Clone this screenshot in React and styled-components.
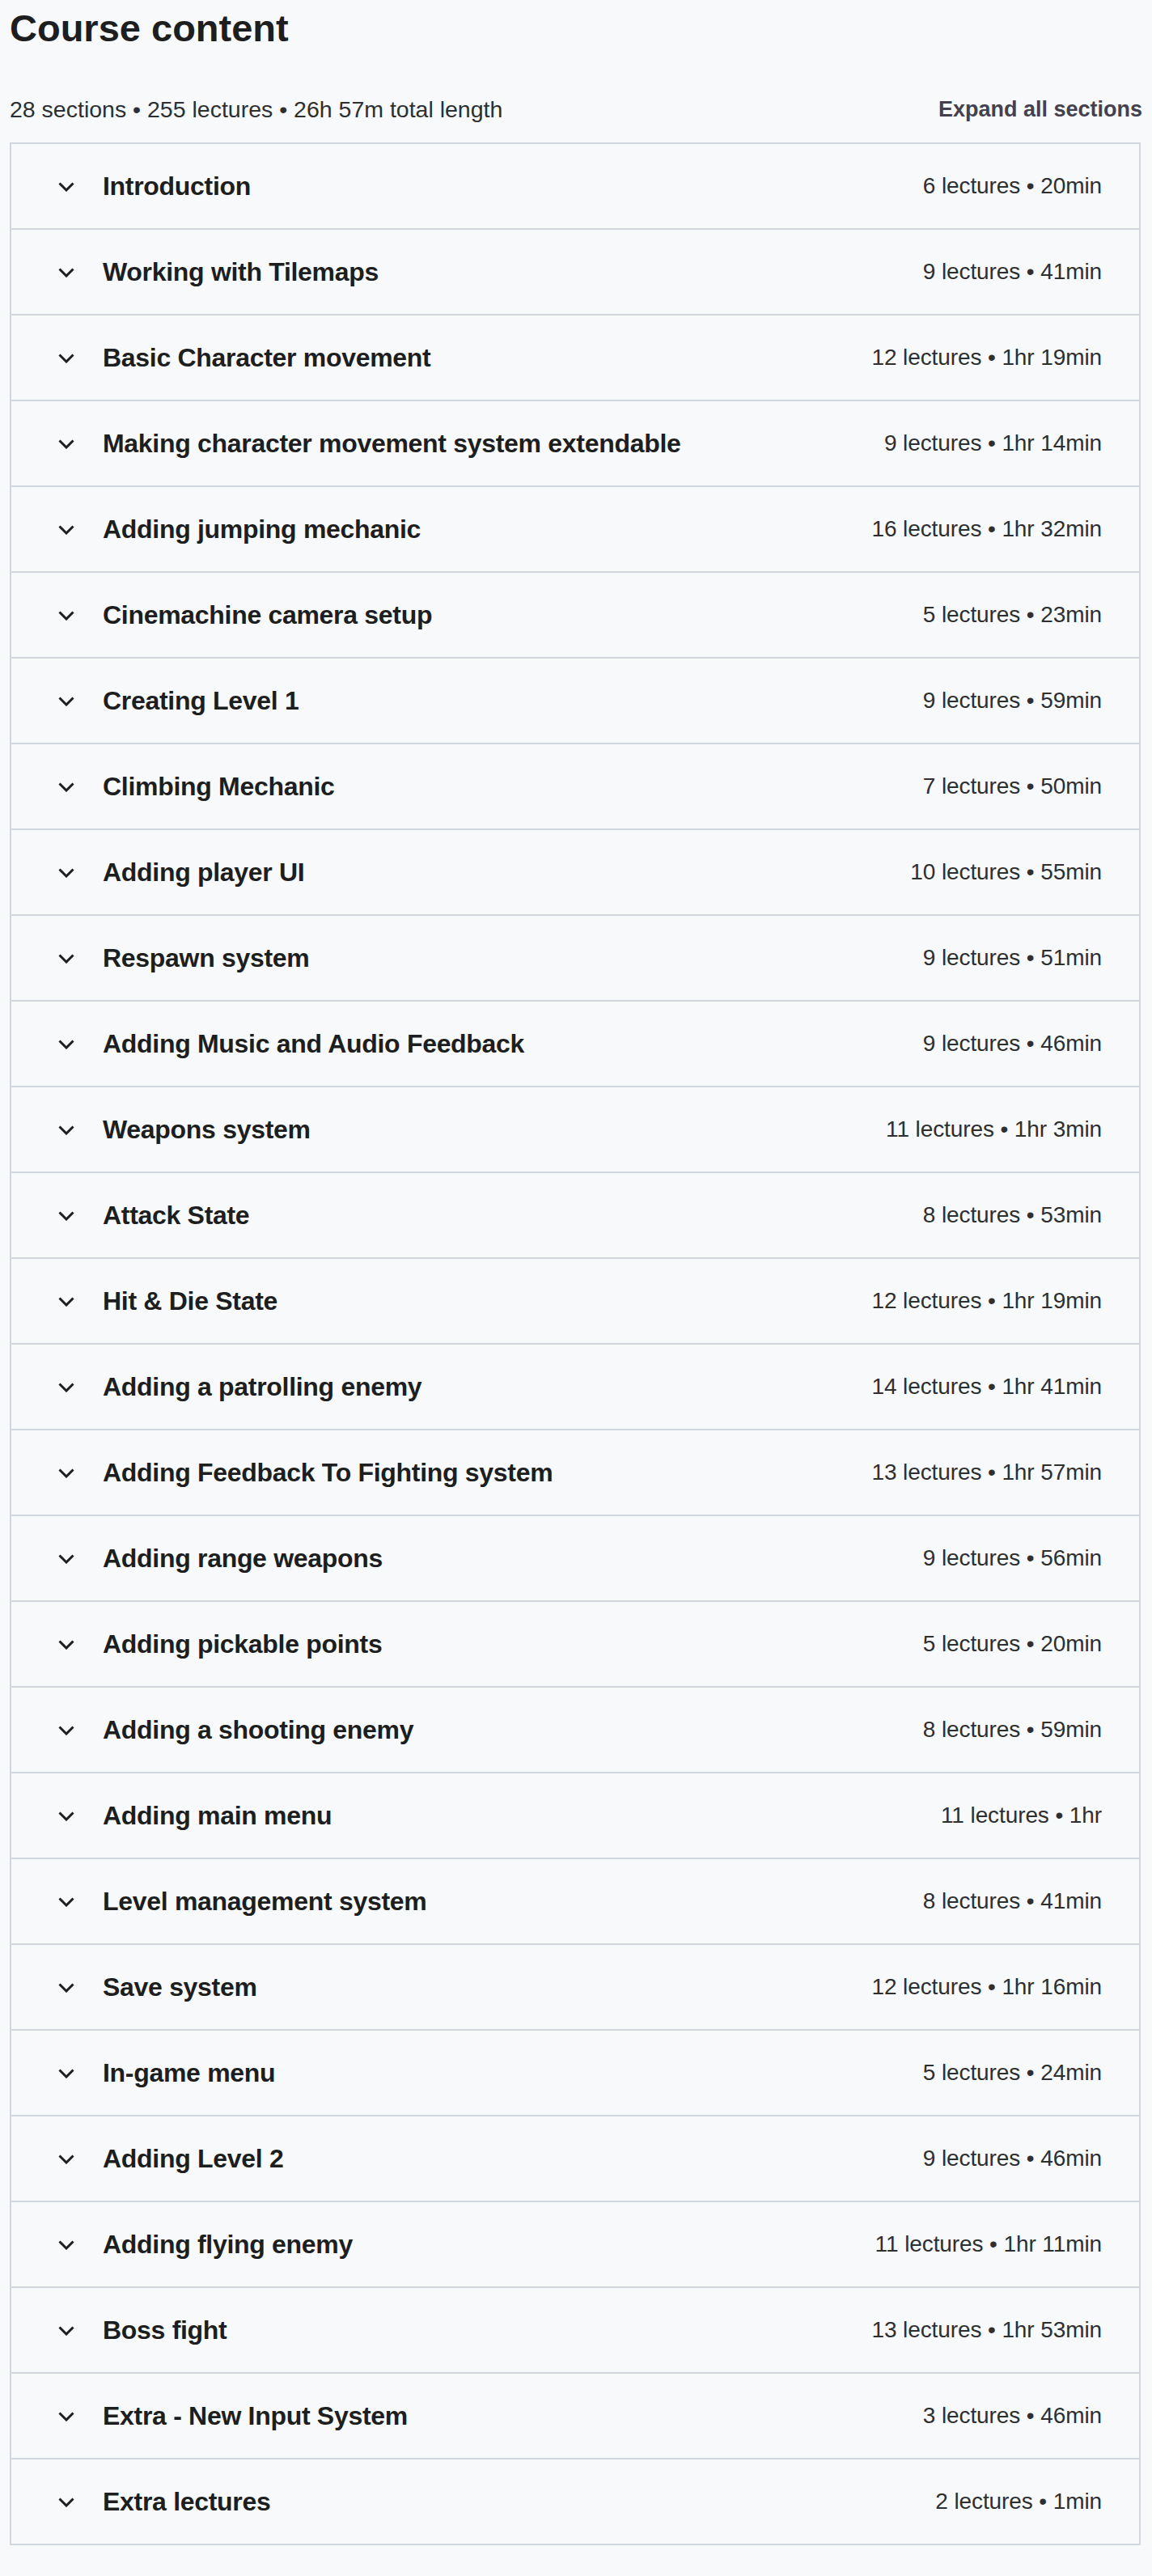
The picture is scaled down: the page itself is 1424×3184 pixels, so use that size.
import React from "react";
import styled, { createGlobalStyle } from "styled-components";

const GlobalStyle = createGlobalStyle`
  html, body {
    margin: 0;
    padding: 0;
    background: #f7f9fa;
  }
  body {
    font-family: "Liberation Sans", Arial, sans-serif;
    color: #1d1e20;
  }
`;

const Page = styled.main`
  padding: 7px 14px 40px 12px;
  background: #f7f9fa;
  min-height: 3184px;
  box-sizing: border-box;
`;

const Heading = styled.h2`
  margin: 0;
  font-size: 47px;
  line-height: 56px;
  font-weight: 700;
  color: #1d1e20;
  letter-spacing: 0;
`;

const SummaryBar = styled.div`
  display: flex;
  justify-content: space-between;
  align-items: center;
  margin-top: 55px;
  margin-bottom: 24px;
  height: 34px;
`;

const SummaryText = styled.span`
  font-size: 28.5px;
  line-height: 34px;
  color: #2d2f31;
`;

const ExpandButton = styled.button`
  border: none;
  background: none;
  padding: 0;
  margin-right: -2px;
  font-family: inherit;
  font-size: 27px;
  line-height: 34px;
  font-weight: 700;
  color: #44414f;
  cursor: pointer;
`;

const SectionList = styled.div`
  border: 2px solid #d1d7dc;
  display: flex;
  flex-direction: column;
`;

const SectionRow = styled.div`
  display: flex;
  align-items: center;
  height: 104px;
  padding: 0 46px 0 58px;
  border-top: ${(p) => (p.$first ? "none" : "2px solid #d1d7dc")};
  background: #f7f9fa;
`;

const Chevron = styled.svg`
  flex: none;
  width: 20px;
  height: 12px;
  margin-right: 35px;
  margin-top: 1px;
`;

const SectionTitle = styled.span`
  flex: 1;
  font-size: 32px;
  line-height: 40px;
  font-weight: 700;
  letter-spacing: -0.3px;
  color: #1d1e20;
`;

const SectionMeta = styled.span`
  flex: none;
  font-size: 28px;
  line-height: 34px;
  letter-spacing: -0.1px;
  color: #2d2f31;
`;

const sections = [
  ["Introduction", "6 lectures • 20min"],
  ["Working with Tilemaps", "9 lectures • 41min"],
  ["Basic Character movement", "12 lectures • 1hr 19min"],
  ["Making character movement system extendable", "9 lectures • 1hr 14min"],
  ["Adding jumping mechanic", "16 lectures • 1hr 32min"],
  ["Cinemachine camera setup", "5 lectures • 23min"],
  ["Creating Level 1", "9 lectures • 59min"],
  ["Climbing Mechanic", "7 lectures • 50min"],
  ["Adding player UI", "10 lectures • 55min"],
  ["Respawn system", "9 lectures • 51min"],
  ["Adding Music and Audio Feedback", "9 lectures • 46min"],
  ["Weapons system", "11 lectures • 1hr 3min"],
  ["Attack State", "8 lectures • 53min"],
  ["Hit & Die State", "12 lectures • 1hr 19min"],
  ["Adding a patrolling enemy", "14 lectures • 1hr 41min"],
  ["Adding Feedback To Fighting system", "13 lectures • 1hr 57min"],
  ["Adding range weapons", "9 lectures • 56min"],
  ["Adding pickable points", "5 lectures • 20min"],
  ["Adding a shooting enemy", "8 lectures • 59min"],
  ["Adding main menu", "11 lectures • 1hr"],
  ["Level management system", "8 lectures • 41min"],
  ["Save system", "12 lectures • 1hr 16min"],
  ["In-game menu", "5 lectures • 24min"],
  ["Adding Level 2", "9 lectures • 46min"],
  ["Adding flying enemy", "11 lectures • 1hr 11min"],
  ["Boss fight", "13 lectures • 1hr 53min"],
  ["Extra - New Input System", "3 lectures • 46min"],
  ["Extra lectures", "2 lectures • 1min"],
];

function ChevronDown() {
  return (
    <Chevron viewBox="0 0 20 12" aria-hidden="true">
      <polyline
        points="1.5,1.5 10,10 18.5,1.5"
        fill="none"
        stroke="#1d1e20"
        strokeWidth="3"
      />
    </Chevron>
  );
}

export default function App() {
  return (
    <>
      <GlobalStyle />
      <Page>
        <Heading>Course content</Heading>
        <SummaryBar>
          <SummaryText>28 sections • 255 lectures • 26h 57m total length</SummaryText>
          <ExpandButton type="button">Expand all sections</ExpandButton>
        </SummaryBar>
        <SectionList>
          {sections.map(([title, meta], i) => (
            <SectionRow key={title} $first={i === 0}>
              <ChevronDown />
              <SectionTitle>{title}</SectionTitle>
              <SectionMeta>{meta}</SectionMeta>
            </SectionRow>
          ))}
        </SectionList>
      </Page>
    </>
  );
}
